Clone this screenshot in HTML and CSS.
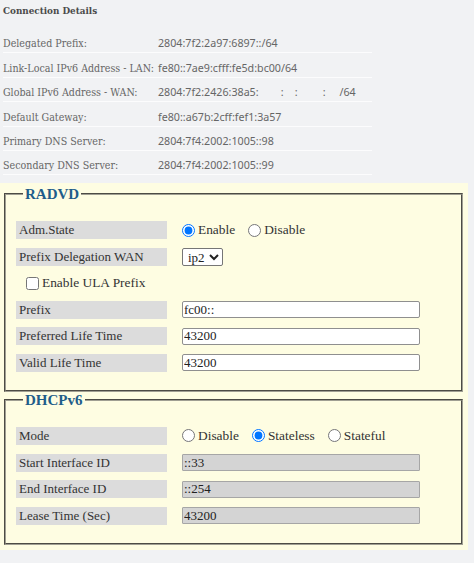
FILE: index.html
```html
<!DOCTYPE html>
<html>
<head>
<meta charset="utf-8">
<link rel="stylesheet" href="styles.css">
</head>
<body>
<div class="conn">
  <div class="conn-title">Connection Details</div>
  <div class="conn-table">
    <div class="conn-row"><span class="k">Delegated Prefix:</span><span class="v">2804:7f2:2a97:6897::/64</span></div>
    <div class="conn-row"><span class="k">Link-Local IPv6 Address - LAN:</span><span class="v">fe80::7ae9:cfff:fe5d:bc00/64</span></div>
    <div class="conn-row"><span class="k">Global IPv6 Address - WAN:</span><span class="v pre">2804:7f2:2426:38a5:        :    :         :     /64</span></div>
    <div class="conn-row"><span class="k">Default Gateway:</span><span class="v">fe80::a67b:2cff:fef1:3a57</span></div>
    <div class="conn-row"><span class="k">Primary DNS Server:</span><span class="v">2804:7f4:2002:1005::98</span></div>
    <div class="conn-row"><span class="k">Secondary DNS Server:</span><span class="v">2804:7f4:2002:1005::99</span></div>
  </div>
</div>
<div class="panel">
  <fieldset class="box">
    <legend>RADVD</legend>
    <div class="form">
      <div class="lbl">Adm.State</div>
      <div class="ctl">
        <label class="opt"><input type="radio" name="adm" checked>Enable</label>
        <label class="opt"><input type="radio" name="adm">Disable</label>
      </div>
      <div class="lbl">Prefix Delegation WAN</div>
      <div class="ctl"><select class="sel"><option>ip2</option></select></div>
      <div class="full"><label class="chk"><input type="checkbox">Enable ULA Prefix</label></div>
      <div class="lbl">Prefix</div>
      <div class="ctl"><input class="txt" type="text" value="fc00::"></div>
      <div class="lbl">Preferred Life Time</div>
      <div class="ctl"><input class="txt" type="text" value="43200"></div>
      <div class="lbl">Valid Life Time</div>
      <div class="ctl"><input class="txt" type="text" value="43200"></div>
    </div>
  </fieldset>
  <fieldset class="box">
    <legend>DHCPv6</legend>
    <div class="form">
      <div class="lbl">Mode</div>
      <div class="ctl">
        <label class="opt"><input type="radio" name="mode">Disable</label>
        <label class="opt"><input type="radio" name="mode" checked>Stateless</label>
        <label class="opt"><input type="radio" name="mode">Stateful</label>
      </div>
      <div class="lbl">Start Interface ID</div>
      <div class="ctl"><input class="txt ro" type="text" value="::33" readonly></div>
      <div class="lbl">End Interface ID</div>
      <div class="ctl"><input class="txt ro" type="text" value="::254" readonly></div>
      <div class="lbl">Lease Time (Sec)</div>
      <div class="ctl"><input class="txt ro" type="text" value="43200" readonly></div>
    </div>
  </fieldset>
</div>
</body>
</html>
```
FILE: styles.css
```css
html, body {
  margin: 0;
  padding: 0;
  background: #f1f2f4;
}
body {
  width: 474px;
  height: 563px;
  overflow: hidden;
  font-family: "Liberation Serif", serif;
}
.conn {
  padding: 4px 0 0 3px;
  height: 183px;
  box-sizing: border-box;
}
.conn-title {
  font-family: "DejaVu Serif Condensed", "DejaVu Serif", serif;
  font-weight: bold;
  font-size: 9.8px;
  color: #4a4a4a;
  line-height: 14px;
  height: 25px;
}
.conn-table {
  width: 369px;
}
.conn-row {
  display: grid;
  grid-template-columns: 155px 1fr;
  align-items: end;
  height: 24.4px;
  box-sizing: border-box;
  padding-bottom: 2px;
  border-bottom: 1.5px solid #fcfcfd;
  color: #666;
}
.k {
  font-family: "DejaVu Serif Condensed", "DejaVu Serif", serif;
  font-size: 10.6px;
  line-height: 14px;
  white-space: nowrap;
}
.v {
  font-family: "Noto Sans", "Open Sans", sans-serif;
  font-size: 10.7px;
  line-height: 14px;
}
.pre {
  white-space: pre;
}
.panel {
  background: #fefde2;
  width: 468px;
  box-sizing: border-box;
  padding: 3px 5px 5px 4px;
}
.box {
  margin: 0;
  padding: 19px 10px 18px 10px;
  border: 2px groove #a09f93;
  min-width: 0;
}
.box legend {
  margin-left: 7px;
  padding: 0 2px;
  font-family: "Liberation Serif", serif;
  font-weight: bold;
  font-size: 15px;
  line-height: 16px;
  color: #1f5d8a;
}
.form {
  display: grid;
  grid-template-columns: 151px 1fr;
  column-gap: 15px;
  row-gap: 8.6px;
  grid-auto-rows: 18px;
  font-size: 13px;
  color: #333;
}
.lbl {
  background: #dcdcdc;
  padding-left: 3px;
  line-height: 18px;
  white-space: nowrap;
}
.ctl {
  display: flex;
  align-items: center;
  gap: 13px;
}
.full {
  grid-column: 1 / -1;
  display: flex;
  align-items: center;
}
.opt, .chk {
  display: flex;
  align-items: center;
  font-size: 13.4px;
  color: #333;
}
.opt input {
  width: 13px;
  height: 13px;
  margin: 0 3px 0 0;
}
.chk input {
  width: 13px;
  height: 13px;
  margin: 0 3px 0 10px;
}
.sel {
  font-family: "Liberation Serif", serif;
  font-size: 13px;
  height: 18px;
  padding: 0 1px;
  border: 1px solid #767676;
  border-radius: 2px;
  background: #fff;
  color: #222;
}
.txt {
  width: 238px;
  height: 17px;
  box-sizing: border-box;
  border: 1px solid #8f8f8f;
  border-radius: 2px;
  padding: 0 1px;
  font-family: "Liberation Serif", serif;
  font-size: 13px;
  color: #222;
  background: #fff;
  outline: none;
}
.ro {
  background: #d4d4d4;
  border: 1.5px solid #a6a6a6;
  border-radius: 1px;
}
```
